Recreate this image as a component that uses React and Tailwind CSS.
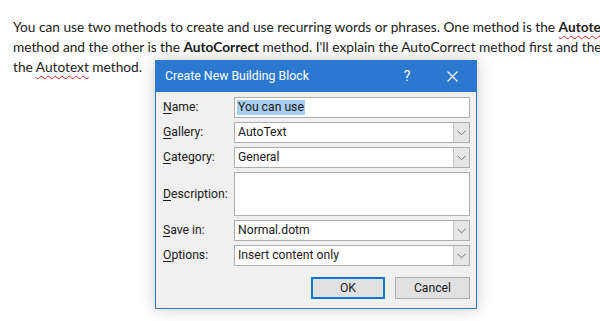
import React from "react";

const Chevron = () => (
  <svg width="9" height="6" viewBox="0 0 9 6" className="block">
    <path d="M0.5 0.8 L4.5 4.8 L8.5 0.8" fill="none" stroke="#6d6d6d" strokeWidth="1" />
  </svg>
);

const Label = ({ k, rest }) => (
  <div className="w-[72px] shrink-0 pl-[1px] text-[12.2px] text-[#1a1a1a]">
    <span className="underline underline-offset-[2px]">{k}</span>
    {rest}
  </div>
);

const Select = ({ value }) => (
  <div className="flex h-[21px] w-[236px] border border-[#adadad] bg-white">
    <div className="flex flex-1 items-center pl-[3px] text-[12.2px] text-[#1a1a1a]">{value}</div>
    <div className="flex w-[16px] items-center justify-center border-l border-[#c4c4c4] bg-[#e6e6e6]">
      <Chevron />
    </div>
  </div>
);

export default function App() {
  return (
    <div className="relative h-[321px] w-[600px] overflow-hidden bg-white" style={{ fontFamily: 'Roboto, sans-serif' }}>
      <div className="whitespace-nowrap pl-[13px] pt-[17px] text-[13.7px] leading-[20px] text-[#1b1b1b]" style={{ fontFamily: 'Lato, sans-serif' }}>
        <div>
          You can use two methods to create and use recurring words or phrases. One method is the{" "}
          <b className="underline decoration-wavy decoration-[#e02020] decoration-[1px] underline-offset-[3px]">Autotext</b>
        </div>
        <div>
          method and the other is the <b>AutoCorrect</b> method. I'll explain the AutoCorrect method first and then
        </div>
        <div>
          the{" "}
          <span className="underline decoration-wavy decoration-[#e02020] decoration-[1px] underline-offset-[3px]">Autotext</span>{" "}
          method.
        </div>
      </div>

      <div className="absolute left-[155px] top-[60px] w-[322px] border border-[#2b78d0] bg-[#f0f0f0] shadow-[0_0_14px_rgba(0,0,0,0.22)]">
        <div className="flex h-[31px] items-center bg-[#2b78d0] pl-[9px] text-white">
          <div className="flex-1 text-[12.3px]">Create New Building Block</div>
          <div className="w-[20px] text-center text-[14px]">?</div>
          <div className="ml-[29px] mr-[18px] flex w-[12px] items-center justify-center">
            <svg width="11" height="11" viewBox="0 0 11 11">
              <path d="M0.5 0.5 L10.5 10.5 M10.5 0.5 L0.5 10.5" stroke="white" strokeWidth="1.2" />
            </svg>
          </div>
        </div>

        <div className="flex flex-col gap-[4px] px-[6px] pt-[5px]">
          <div className="flex items-center">
            <Label k="N" rest="ame:" />
            <div className="flex h-[21px] w-[236px] items-center border border-[#adadad] bg-white pl-[2px] text-[12.2px] text-[#1a1a1a]">
              <span className="bg-[#a9cdf0] px-[1px] leading-[15px]">You can use</span>
            </div>
          </div>
          <div className="flex items-center">
            <Label k="G" rest="allery:" />
            <Select value="AutoText" />
          </div>
          <div className="flex items-center">
            <Label k="C" rest="ategory:" />
            <Select value="General" />
          </div>
          <div className="flex items-center">
            <Label k="D" rest="escription:" />
            <div className="h-[44px] w-[236px] border border-[#adadad] bg-white" />
          </div>
          <div className="flex items-center">
            <Label k="S" rest="ave in:" />
            <Select value="Normal.dotm" />
          </div>
          <div className="flex items-center">
            <Label k="O" rest="ptions:" />
            <Select value="Insert content only" />
          </div>
          <div className="mt-[7px] mb-[9px] flex justify-end gap-[10px]">
            <div className="flex h-[22px] w-[74px] items-center justify-center border-2 border-[#0078d7] bg-[#e1e1e1] text-[12.2px] text-[#1a1a1a]">
              OK
            </div>
            <div className="flex h-[22px] w-[75px] items-center justify-center border border-[#adadad] bg-[#e1e1e1] text-[12.2px] text-[#1a1a1a]">
              Cancel
            </div>
          </div>
        </div>
      </div>
    </div>
  );
}
